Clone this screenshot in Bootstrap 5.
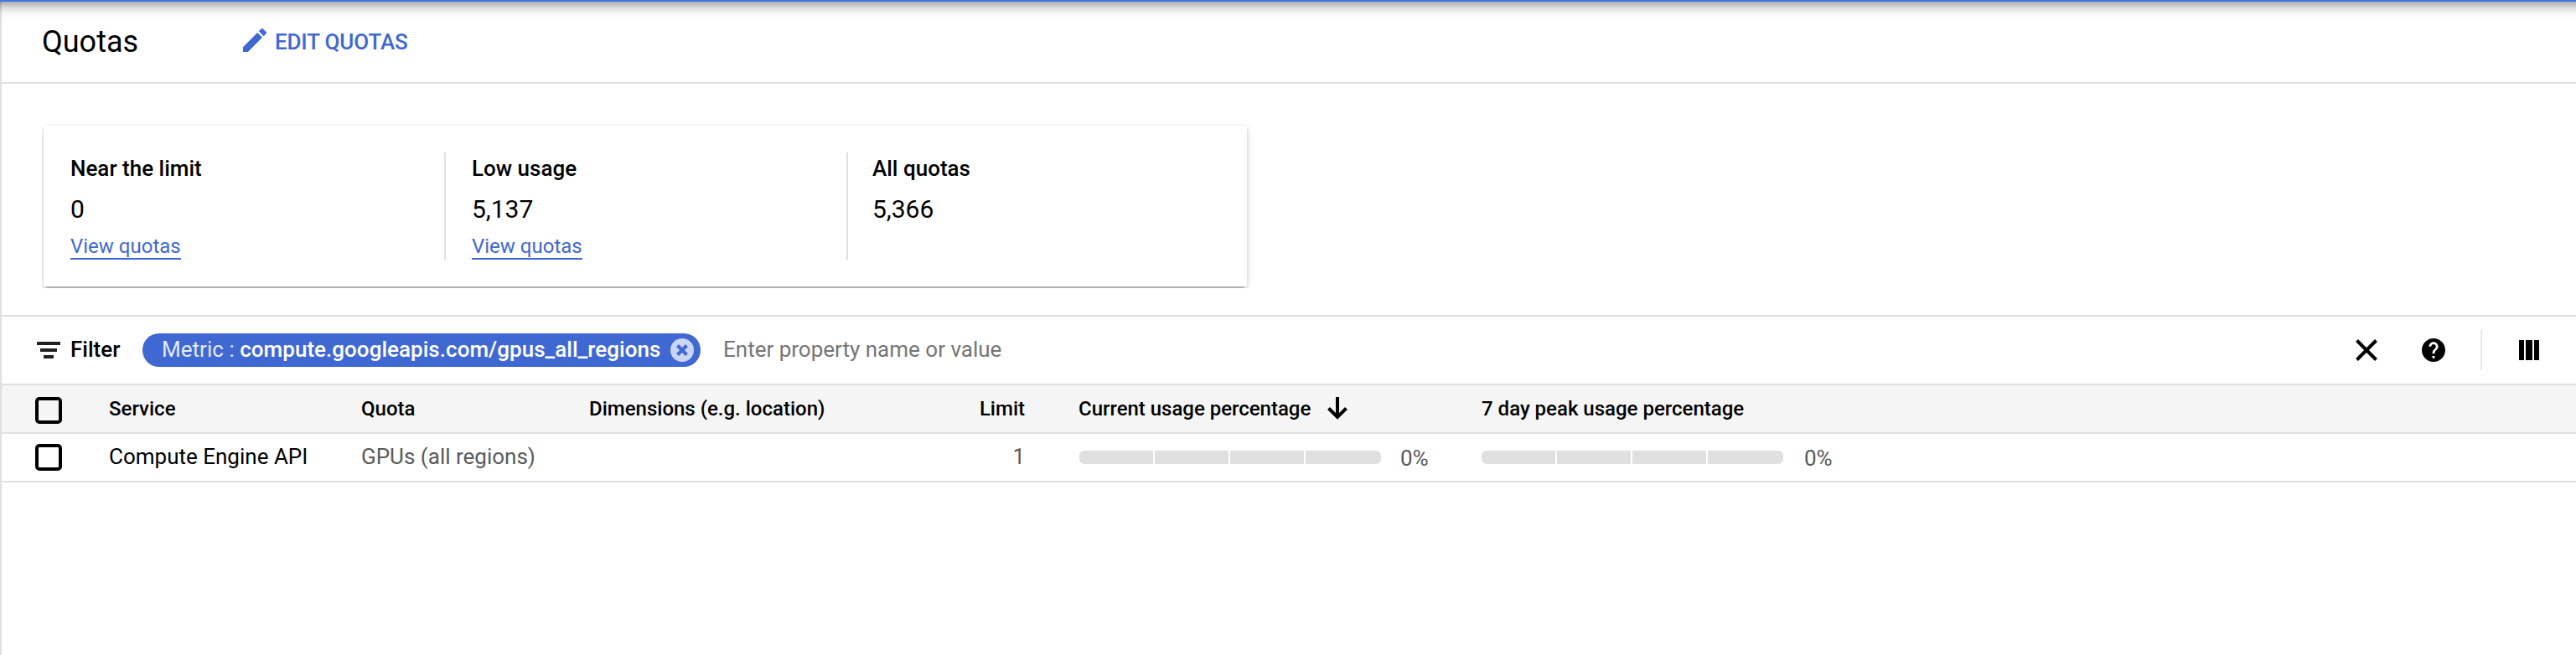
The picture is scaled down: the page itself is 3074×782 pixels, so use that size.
<!DOCTYPE html>
<html lang="en">
<head>
<meta charset="utf-8">
<title>Quotas</title>
<link href="https://cdn.jsdelivr.net/npm/bootstrap@5.3.0/dist/css/bootstrap.min.css" rel="stylesheet">
<style>
  body { font-family: Roboto, "Liberation Sans", sans-serif; font-size: 26px; line-height: 32px; color: #000; background: #fff; height: 782px; overflow: hidden; }
  .fw-medium-text { font-weight: 500; }
  .top-strip { height: 2px; background: #3b78e7; }
  .top-strip::after { content: ""; position: absolute; top: 2px; left: 0; right: 0; height: 20px; background: linear-gradient(rgba(0,0,0,.32), rgba(0,0,0,.22) 20%, rgba(0,0,0,.1) 45%, rgba(0,0,0,.03) 72%, transparent); }
  .page-area { min-height: 780px; border-left: 2px solid #e0e0e0; }
  .line-bottom { border-bottom: 2px solid #e0e0e0; }
  .line-top { border-top: 2px solid #e0e0e0; }
  .page-head { height: 98px; padding-left: 48px; }
  .page-title { font-size: 36px; line-height: 44px; font-weight: 400; width: 240px; }
  .edit-link { color: #3f68d2; gap: 10px; letter-spacing: -.15px; }
  .stats-wrap { padding: 50px 0 34px 50px; }
  .stats { width: 1436px; height: 192px; padding: 32px 0; background: #fff; box-shadow: 0 6px 2px -4px rgba(0,0,0,.2), 0 4px 4px rgba(0,0,0,.14), 0 2px 10px rgba(0,0,0,.12); clip-path: inset(-2px -8px -2px -2px); }
  .stat { padding-left: 30px; height: 128px; border-right: 2px solid #e0e0e0; width: 480px; }
  .stat:first-child { padding-left: 32px; }
  .stat:nth-child(2) { padding-left: 31px; }
  .stat:last-child { border-right: 0; width: 476px; padding-left: 29px; }
  .stat-label { padding-top: 3px; }
  .stat-value { font-size: 30px; line-height: 40px; padding-top: 13px; }
  .stat-link { font-size: 24px; line-height: 28px; color: #3f68d2; border-bottom: 2px solid #3f68d2; }
  .filter-bar { height: 84px; padding: 0 44px 0 42px; }
  .filter-bar .lift { position: relative; top: -1px; }
  .filter-label { margin-left: 12px; width: 86px; }
  .chip { height: 40px; width: 666px; border-radius: 20px; background: #3f68d2; color: #fff; padding: 0 8px 0 23px; letter-spacing: .03px; }
  .chip-key { color: #e4eafa; }
  .filter-hint { color: #757575; margin-left: 27px; }
  .help { margin-left: 52px; }
  .vline { width: 2px; height: 48px; background: #e8e8e8; margin: 0 44px 0 42px; }
  .quota-table { table-layout: fixed; width: 100%; border-collapse: separate; border-spacing: 0; }
  .quota-table th, .quota-table td { height: 58px; padding: 0; border-bottom: 2px solid #e0e0e0; vertical-align: middle; white-space: nowrap; }
  .quota-table th { background: #f5f5f5; font-size: 24px; font-weight: 500; }
  .quota-table td { color: #5a5a5a; }
  .quota-table td.cell-text { padding-bottom: 2px; }
  .quota-table .pick { padding-left: 40px; }
  .quota-table th.pick { padding-top: 4px; }
  .quota-table .limit { padding-right: 65px; }
  .tick { width: 32px; height: 32px; border: 4px solid #000; border-radius: 5px; }
  .sort { margin: -2px 0 -2px 20px; }
  .col-label { letter-spacing: -.02px; margin-left: -1px; }
  .meter { width: 360px; height: 16px; border-radius: 6px; overflow: hidden; gap: 2px; }
  .meter i { width: 88px; background: #e0e0e0; }
  .meter i:last-child { width: 90px; }
  .pct { margin-left: 23px; padding-top: 2px; }
  .peak .pct { margin-left: 25px; }
</style>
</head>
<body>
<div class="top-strip position-relative"></div>
<div class="page-area">
  <header class="page-head line-bottom d-flex align-items-center">
    <h1 class="page-title mb-0">Quotas</h1>
    <a href="#" class="edit-link d-flex align-items-center text-decoration-none fw-medium-text">
      <svg width="28" height="28" viewBox="3 3 18 18" fill="currentColor" class="mb-1"><path d="M3 17.250V21h3.750L17.810 9.940l-3.750-3.750L3 17.250zM20.710 7.040a1 1 0 0 0 0-1.410l-2.340-2.340a1 1 0 0 0-1.410 0l-1.830 1.830 3.750 3.750 1.830-1.830z"/></svg>
      <span>EDIT QUOTAS</span>
    </a>
  </header>

  <section class="stats-wrap">
    <div class="stats d-flex">
      <div class="stat d-flex flex-column align-items-start">
        <div class="stat-label fw-medium-text">Near the limit</div>
        <div class="stat-value">0</div>
        <a href="#" class="stat-link text-decoration-none mt-auto">View quotas</a>
      </div>
      <div class="stat d-flex flex-column align-items-start">
        <div class="stat-label fw-medium-text">Low usage</div>
        <div class="stat-value">5,137</div>
        <a href="#" class="stat-link text-decoration-none mt-auto">View quotas</a>
      </div>
      <div class="stat d-flex flex-column align-items-start">
        <div class="stat-label fw-medium-text">All quotas</div>
        <div class="stat-value">5,366</div>
      </div>
    </div>
  </section>

  <section class="filter-bar line-top line-bottom d-flex align-items-center">
    <svg width="28" height="20" viewBox="0 0 28 20" fill="#212121"><path d="M0 0h28v4H0zM4 8h20v4H4zM8 16h12v4H8z"/></svg>
    <span class="filter-label fw-medium-text lift">Filter</span>
    <div class="chip d-flex align-items-center">
      <span class="text-nowrap lift"><span class="chip-key">Metric :</span> <span class="fw-medium-text">compute.googleapis.com/gpus_all_regions</span></span>
      <svg class="ms-auto" width="28" height="28" viewBox="0 0 28 28"><circle cx="14" cy="14" r="14" fill="#cad5f3"/><path d="M8.500 8.500l11 11M19.500 8.500l-11 11" stroke="#3f68d2" stroke-width="4"/></svg>
    </div>
    <span class="filter-hint lift">Enter property name or value</span>
    <div class="ms-auto d-flex align-items-center">
      <svg width="28" height="28" viewBox="0 0 28 28"><path d="M2.500 2.500l23 23M25.500 2.500l-23 23" stroke="#000" stroke-width="4"/></svg>
      <svg class="help" width="28" height="28" viewBox="2 2 20 20"><path d="M12 2C6.480 2 2 6.480 2 12s4.480 10 10 10 10-4.480 10-10S17.520 2 12 2zm1 17h-2v-2h2v2zm2.070-7.750l-.9.920C13.450 12.900 13 13.500 13 15h-2v-.5c0-1.100.450-2.100 1.170-2.830l1.240-1.260c.370-.360.590-.860.590-1.410 0-1.100-.9-2-2-2s-2 .9-2 2H8c0-2.210 1.790-4 4-4s4 1.790 4 4c0 .880-.360 1.680-.930 2.250z"/></svg>
      <span class="vline"></span>
      <svg width="24" height="24" viewBox="0 0 24 24"><path d="M0 0h6v24H0zM8 0h8v24H8zM18 0h6v24h-6z"/></svg>
    </div>
  </section>

  <table class="quota-table">
    <colgroup><col style="width:128px"><col style="width:301px"><col style="width:272px"><col style="width:400px"><col style="width:185px"><col style="width:480px"><col></colgroup>
    <thead>
      <tr>
        <th class="pick"><div class="tick"></div></th>
        <th>Service</th>
        <th>Quota</th>
        <th>Dimensions (e.g. location)</th>
        <th class="limit text-end">Limit</th>
        <th><div class="d-flex align-items-center"><span class="col-label">Current usage percentage</span><svg class="sort" width="24" height="28" viewBox="0 0 24 28"><path d="M12 0v24M1.500 13.500L12 24 22.500 13.500" fill="none" stroke="#000" stroke-width="4"/></svg></div></th>
        <th>7 day peak usage percentage</th>
      </tr>
    </thead>
    <tbody>
      <tr>
        <td class="pick"><div class="tick"></div></td>
        <td class="cell-text text-black">Compute Engine API</td>
        <td class="cell-text">GPUs (all regions)</td>
        <td></td>
        <td class="cell-text limit text-end">1</td>
        <td><div class="d-flex align-items-center"><div class="meter d-flex"><i></i><i></i><i></i><i></i></div><span class="pct">0%</span></div></td>
        <td class="peak"><div class="d-flex align-items-center"><div class="meter d-flex"><i></i><i></i><i></i><i></i></div><span class="pct">0%</span></div></td>
      </tr>
    </tbody>
  </table>
</div>
<script src="https://cdn.jsdelivr.net/npm/bootstrap@5.3.0/dist/js/bootstrap.bundle.min.js"></script>
</body>
</html>
